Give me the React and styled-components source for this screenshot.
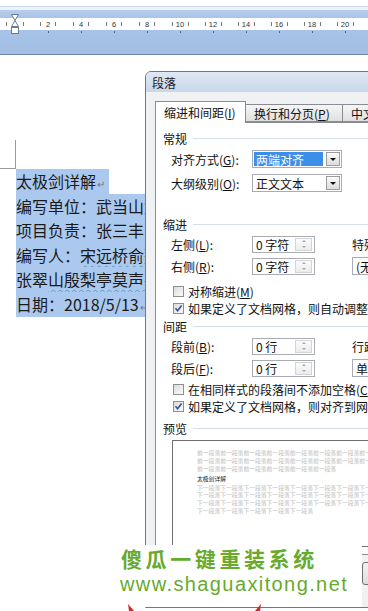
import React from 'react';
import styled, { createGlobalStyle } from 'styled-components';

const GlobalStyle = createGlobalStyle`
  html, body {
    margin: 0;
    padding: 0;
    background: #fff;
    overflow: hidden;
  }
`;

const Screen = styled.div`
  position: relative;
  width: 368px;
  height: 611px;
  overflow: hidden;
  background: #fff;
  font-family: "Noto Sans CJK SC", sans-serif;
`;

const TopStrip = styled.div`
  height: 10px;
  background: linear-gradient(#fff 0, #fff 6px, #cad9ec 6px, #cad9ec 7px, #eef3fa 7px);
`;

const Ruler = styled.div`
  height: 44px;
  border-bottom: 1px solid #6f88a9;
  background: linear-gradient(
    #b7cdeb 0,
    #a9c4e8 8px,
    #fff 8px,
    #fff 20px,
    #a8c3e7 20px,
    #a2bee4 100%
  );
  display: flex;
  padding-left: 0;
  margin-left: -1.5px;
`;

const RulerCell = styled.div`
  width: 33px;
  flex: none;
  display: flex;
  flex-direction: column;
  align-items: center;
  padding-top: 8px;
`;

const Marks = styled.div`
  width: ${(p) => (p.$wide ? 18 : 17)}px;
  height: 12px;
  display: flex;
  align-items: center;
  justify-content: space-between;
  font: 7.5px "Liberation Sans", sans-serif;
  color: #333;
`;

const Tick = styled.span`
  width: 1px;
  height: 4px;
  background: #7a7a7a;
`;

const TabStop = styled.span`
  width: 1px;
  height: 2px;
  margin-top: 1px;
  background: ${(p) => (p.$hidden ? 'transparent' : '#4f6688')};
`;

const DocArea = styled.div`
  padding-top: 85px;
`;

const CornerMark = styled.div`
  width: 15px;
  height: 28px;
  border-right: 1px solid #9a9a9a;
  border-bottom: 1px solid #9a9a9a;
`;

const TextBlock = styled.div`
  margin-left: 16px;
  font-size: 16px;
  color: #1a1a1a;
`;

const SelLine = styled.div`
  width: ${(p) => (p.$fit ? 'fit-content' : 'auto')};
  height: 24.6px;
  line-height: 24.6px;
  white-space: nowrap;
  overflow: hidden;
  background: #abc9ee;
  padding-right: ${(p) => (p.$fit ? '4px' : '0')};
`;

const Wavy = styled.span`
  text-decoration: underline wavy #5f9cc0;
  text-decoration-thickness: 1px;
  text-underline-offset: 3px;
`;

const Pilcrow = styled.span`
  font-size: 10px;
  color: #777;
  margin-left: 1px;
`;

const Dialog = styled.div`
  position: absolute;
  left: 145px;
  top: 71px;
  width: 262px;
  height: 537px;
  box-sizing: border-box;
  border: 1px solid #6c798c;
  border-radius: 6px 6px 0 0;
  background: #f0f0f0;
  overflow: hidden;
  font-size: 12px;
  color: #111;
  display: flex;
  flex-direction: column;
`;

const TitleBar = styled.div`
  height: 20px;
  flex: none;
  display: flex;
  align-items: center;
  padding-left: 6px;
  background: linear-gradient(#dfe8f4, #c8d7ea);
  color: #222;
`;

const Client = styled.div`
  flex: 1;
  padding: 8px 0 0 9px;
  background: #f0f1f3;
`;

const TabsRow = styled.div`
  height: 22px;
  display: flex;
  align-items: flex-end;
  position: relative;
  z-index: 1;
`;

const Tab = styled.div`
  flex: none;
  box-sizing: border-box;
  width: ${(p) => p.$w}px;
  height: ${(p) => (p.$active ? 22 : 18)}px;
  margin-bottom: ${(p) => (p.$active ? -1 : 0)}px;
  display: flex;
  align-items: center;
  padding-left: 8px;
  white-space: nowrap;
  border: 1px solid #898c95;
  border-bottom: ${(p) => (p.$active ? 'none' : '1px solid #898c95')};
  border-left: ${(p) => (p.$first ? '1px solid #898c95' : 'none')};
  background: ${(p) => (p.$active ? '#fff' : 'linear-gradient(#f6f6f6, #e0e0e0)')};
`;

const Panel = styled.div`
  height: 433px;
  box-sizing: border-box;
  border: 1px solid #898c95;
  background: #fff;
  padding: 6px 0 0 7px;
`;

const GroupHeader = styled.div`
  height: 18px;
  margin-top: ${(p) => p.$mt || 0}px;
  display: flex;
  align-items: center;
  &::after {
    content: '';
    flex: 1;
    height: 1px;
    margin-left: 6px;
    background: #d6dee6;
  }
`;

const FieldRow = styled.div`
  height: ${(p) => p.$h}px;
  display: grid;
  grid-template-columns: 81px 100px 80px;
  align-items: center;
  padding-left: 8px;
  white-space: nowrap;
`;

const Combo = styled.div`
  width: ${(p) => p.$w}px;
  height: 18px;
  box-sizing: border-box;
  border: 1px solid #a9acb4;
  padding: 1px;
  display: flex;
  align-items: stretch;
  background: #fff;
`;

const ComboValue = styled.div`
  flex: 1;
  display: flex;
  align-items: center;
  padding-left: 2px;
  margin-right: 3px;
  background: ${(p) => (p.$selected ? '#3d8ee8' : 'transparent')};
  color: ${(p) => (p.$selected ? '#fff' : '#111')};
`;

const ComboButton = styled.div`
  width: 14px;
  flex: none;
  box-sizing: border-box;
  border: 1px solid #9c9c9c;
  background: linear-gradient(#fafafa, #dcdcdc);
  display: flex;
  align-items: center;
  justify-content: center;
  &::after {
    content: '';
    border-left: 3px solid transparent;
    border-right: 3px solid transparent;
    border-top: 3px solid #111;
  }
`;

const Spin = styled.div`
  width: 63px;
  height: 17px;
  box-sizing: border-box;
  border: 1px solid #a9acb4;
  display: flex;
  background: #fff;
`;

const SpinValue = styled.div`
  flex: 1;
  display: flex;
  align-items: center;
  padding-left: 3px;
`;

const Spinner = styled.div`
  width: 15px;
  margin: 1px 2px 1px 0;
  display: flex;
  flex-direction: column;
  border: 1px solid #d4d4d4;
  background: linear-gradient(#fbfbfb, #ececec);
`;

const SpinHalf = styled.div`
  flex: 1;
  display: flex;
  align-items: center;
  justify-content: center;
  &::after {
    content: '';
    border-left: 2.5px solid transparent;
    border-right: 2.5px solid transparent;
    ${(p) => (p.$up ? 'border-bottom' : 'border-top')}: 2.5px solid #a8a8a8;
  }
`;

const CheckRow = styled.div`
  height: 17px;
  margin-top: ${(p) => p.$mt || 0}px;
  display: flex;
  align-items: center;
  gap: 4px;
  padding-left: 10px;
  white-space: nowrap;
`;

const Box = styled.span`
  width: 11px;
  height: 11px;
  flex: none;
  box-sizing: border-box;
  border: 1px solid #8e8f8f;
  background: linear-gradient(135deg, #dcdcdc, #fbfbfb);
  display: flex;
  align-items: center;
  justify-content: center;
`;

const Preview = styled.div`
  margin: 3px 0 0 9px;
  height: 107px;
  box-sizing: border-box;
  border: 1px solid #6e6e6e;
  background: #fff;
  padding: 8px 0 0 24px;
  font-size: 5.8px;
  line-height: 7.8px;
  white-space: nowrap;
  overflow: hidden;
`;

const PreviewPara = styled.div`
  color: ${(p) => (p.$current ? '#222' : '#bdbdbd')};
  margin-top: ${(p) => p.$mt || 0}px;
`;

const Footer = styled.div`
  padding: 7px 0 0 207px;
`;

const Button = styled.div`
  width: 75px;
  height: 23px;
  box-sizing: border-box;
  border: 1px solid #707070;
  border-radius: 3px;
  background: linear-gradient(#f3f3f3, #dddddd);
`;

const Watermark = styled.div`
  position: absolute;
  left: 118px;
  top: 545px;
  width: 244px;
  height: 62px;
  background: #fff;
  color: #67aa2d;
`;

const BrandName = styled.div`
  height: 26px;
  line-height: 26px;
  padding-left: 3px;
  font-size: 21px;
  font-weight: 700;
  letter-spacing: 3.6px;
  white-space: nowrap;
`;

const BrandUrl = styled.div`
  margin-top: 2px;
  height: 26px;
  line-height: 26px;
  padding-left: 2px;
  font: 20px "Liberation Sans", sans-serif;
  letter-spacing: 1.4px;
  white-space: nowrap;
`;

const ArrowMark = styled.svg`
  position: absolute;
  top: 603px;
  left: ${(p) => p.$x}px;
`;

const Hourglass = () => (
  <svg width="8" height="20" viewBox="0 0 8 20">
    <path d="M0.5 0.5 H7.5 L4 6.5 Z" fill="#fff" stroke="#6b7b8f" />
    <path d="M4 6.5 L0.5 12.5 H7.5 Z" fill="#fff" stroke="#6b7b8f" />
    <rect x="0.5" y="13.5" width="7" height="6" fill="#fff" stroke="#6b7b8f" />
  </svg>
);

const Check = () => (
  <svg width="9" height="9" viewBox="0 0 9 9">
    <path d="M1.5 4.3 L3.6 6.8 L7.6 1.6" fill="none" stroke="#3a4f8c" strokeWidth="1.6" />
  </svg>
);

const M = ({ k }) => (
  <>
    (<u>{k}</u>)
  </>
);

const numbers = [2, 4, 6, 8, 10, 12, 14, 16, 18, 20];
const prevLines = [
  '前一段落前一段落前一段落前一段落前一段落前一段落前一段落前一段落',
  '前一段落前一段落前一段落前一段落前一段落前一段落前一段落前一段落',
  '前一段落前一段落前一段落前一段落前一段落前一段落',
];
const nextLines = [
  '下一段落下一段落下一段落下一段落下一段落下一段落下一段落下一段落',
  '下一段落下一段落下一段落下一段落下一段落下一段落下一段落下一段落',
  '下一段落下一段落下一段落下一段落下一段落下一段落下一段落下一段落',
  '下一段落下一段落下一段落下一段落下一段落',
];

export default function App() {
  return (
    <Screen>
      <GlobalStyle />
      <TopStrip />
      <Ruler>
        <RulerCell>
          <Marks $wide>
            <Tick />
            <Hourglass />
            <Tick />
          </Marks>
          <TabStop $hidden />
        </RulerCell>
        {numbers.map((n) => (
          <RulerCell key={n}>
            <Marks>
              <Tick />
              <span>{n}</span>
              <Tick />
            </Marks>
            <TabStop />
          </RulerCell>
        ))}
      </Ruler>

      <DocArea>
        <CornerMark />
        <TextBlock>
          <SelLine $fit>
            太极剑详解<Pilcrow>↵</Pilcrow>
          </SelLine>
          <SelLine>编写单位：武当山太极研究会</SelLine>
          <SelLine>项目负责：张三丰</SelLine>
          <SelLine>
            编写人：<Wavy>宋远桥俞莲舟俞岱岩</Wavy>
          </SelLine>
          <SelLine>
            张翠<Wavy>山殷梨亭莫声谷</Wavy>
          </SelLine>
          <SelLine>
            日期：2018/5/13<Pilcrow>↵</Pilcrow>
          </SelLine>
        </TextBlock>
      </DocArea>

      <Dialog>
        <TitleBar>段落</TitleBar>
        <Client>
          <TabsRow>
            <Tab $active $first $w={91}>
              缩进和间距<M k="I" />
            </Tab>
            <Tab $w={97}>
              换行和分页<M k="P" />
            </Tab>
            <Tab $w={90}>
              中文版式<M k="H" />
            </Tab>
          </TabsRow>
          <Panel>
            <GroupHeader>常规</GroupHeader>
            <FieldRow $h={24}>
              <span>
                对齐方式<M k="G" />:
              </span>
              <Combo $w={90}>
                <ComboValue $selected>两端对齐</ComboValue>
                <ComboButton />
              </Combo>
            </FieldRow>
            <FieldRow $h={24}>
              <span>
                大纲级别<M k="O" />:
              </span>
              <Combo $w={90}>
                <ComboValue>正文文本</ComboValue>
                <ComboButton />
              </Combo>
            </FieldRow>

            <GroupHeader $mt={20}>缩进</GroupHeader>
            <FieldRow $h={22}>
              <span>
                左侧<M k="L" />:
              </span>
              <Spin>
                <SpinValue>0 字符</SpinValue>
                <Spinner>
                  <SpinHalf $up />
                  <SpinHalf />
                </Spinner>
              </Spin>
              <span>
                特殊格式<M k="S" />:
              </span>
            </FieldRow>
            <FieldRow $h={22}>
              <span>
                右侧<M k="R" />:
              </span>
              <Spin>
                <SpinValue>0 字符</SpinValue>
                <Spinner>
                  <SpinHalf $up />
                  <SpinHalf />
                </Spinner>
              </Spin>
              <Combo $w={80}>
                <ComboValue>(无)</ComboValue>
                <ComboButton />
              </Combo>
            </FieldRow>
            <CheckRow $mt={6}>
              <Box />
              <span>
                对称缩进<M k="M" />
              </span>
            </CheckRow>
            <CheckRow>
              <Box>
                <Check />
              </Box>
              <span>
                如果定义了文档网格，则自动调整右缩进<M k="D" />
              </span>
            </CheckRow>

            <GroupHeader>间距</GroupHeader>
            <FieldRow $h={22}>
              <span>
                段前<M k="B" />:
              </span>
              <Spin>
                <SpinValue>0 行</SpinValue>
                <Spinner>
                  <SpinHalf $up />
                  <SpinHalf />
                </Spinner>
              </Spin>
              <span>
                行距<M k="N" />:
              </span>
            </FieldRow>
            <FieldRow $h={22}>
              <span>
                段后<M k="F" />:
              </span>
              <Spin>
                <SpinValue>0 行</SpinValue>
                <Spinner>
                  <SpinHalf $up />
                  <SpinHalf />
                </Spinner>
              </Spin>
              <Combo $w={80}>
                <ComboValue>单倍行距</ComboValue>
                <ComboButton />
              </Combo>
            </FieldRow>
            <CheckRow $mt={2}>
              <Box />
              <span>
                在相同样式的段落间不添加空格<M k="C" />
              </span>
            </CheckRow>
            <CheckRow>
              <Box>
                <Check />
              </Box>
              <span>
                如果定义了文档网格，则对齐到网格<M k="W" />
              </span>
            </CheckRow>

            <GroupHeader $mt={4}>预览</GroupHeader>
            <Preview>
              {prevLines.map((t, i) => (
                <PreviewPara key={'p' + i}>{t}</PreviewPara>
              ))}
              <PreviewPara $current $mt={3}>
                太极剑详解
              </PreviewPara>
              {nextLines.map((t, i) => (
                <PreviewPara key={'n' + i} $mt={i === 0 ? 0.5 : 0}>
                  {t}
                </PreviewPara>
              ))}
            </Preview>
          </Panel>
          <Footer>
            <Button />
          </Footer>
        </Client>
      </Dialog>

      <Watermark>
        <BrandName>傻瓜一键重装系统</BrandName>
        <BrandUrl>www.shaguaxitong.net</BrandUrl>
      </Watermark>

      <ArrowMark $x={127} width="8" height="8" viewBox="0 0 8 8">
        <path d="M1 1 L7 8 L2 8 Z" fill="#d8232a" />
      </ArrowMark>
      <ArrowMark $x={254} width="8" height="8" viewBox="0 0 8 8">
        <path d="M7 1 L1 8 L6 8 Z" fill="#d8232a" />
      </ArrowMark>
    </Screen>
  );
}
